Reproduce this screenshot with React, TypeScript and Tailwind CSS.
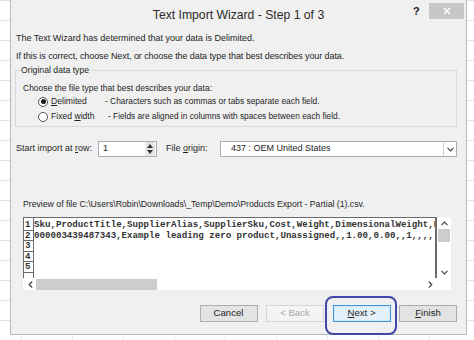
import React from "react";

const Radio = ({ checked }: { checked: boolean }) => (
  <span className="w-[10px] h-[10px] rounded-full border border-[#555] bg-white flex items-center justify-center shrink-0">
    {checked && <span className="w-[5px] h-[5px] rounded-full bg-[#1a1a1a]" />}
  </span>
);

const Btn = ({ children, disabled, focused }: { children: React.ReactNode; disabled?: boolean; focused?: boolean }) => (
  <div
    className={
      "w-[58px] h-[17px] flex items-center justify-center text-[9.6px] border " +
      (disabled
        ? "bg-[#f4f4f4] border-[#d5d5d5] text-[#a8a8a8]"
        : focused
        ? "bg-[#e5f1fb] border-[#3c98e0] text-[#222] ring-1 ring-inset ring-[#cfe6f8]"
        : "bg-[#e3e3e3] border-[#adadad] text-[#222]")
    }
  >
    {children}
  </div>
);

export default function App() {
  const rows = [
    "Sku,ProductTitle,SupplierAlias,SupplierSku,Cost,Weight,DimensionalWeight,DimensionalUnit",
    "000003439487343,Example leading zero product,Unassigned,,1.00,0.00,,1,,,,,,,",
    "",
    "",
    "",
  ];
  return (
    <div className="w-[474px] h-[340px] overflow-hidden relative bg-white bg-[linear-gradient(#e3e3e3_1px,transparent_1px),linear-gradient(90deg,#e3e3e3_1px,transparent_1px)] bg-[size:51px_20px] bg-[position:21px_0px] font-[family-name:'Liberation_Sans',Arial,sans-serif] text-[#1e1e1e]">
      <div className="ml-[10px] w-[457px] h-[335px] bg-[#f0f0f0] border-x border-b border-[#b9b9b9] flex flex-col relative">
        {/* title bar */}
        <div className="h-[28px] shrink-0 relative flex items-start justify-center">
          <div className="pt-[7px] text-[12.2px] leading-[16px] text-[#2b2b2b]">Text Import Wizard - Step 1 of 3</div>
          <div className="absolute left-[402px] top-[4px] text-[11px] font-bold text-[#222] leading-[14px]">?</div>
          <div className="absolute left-[418px] top-[3px] w-[35px] h-[16px] bg-[#c7c7c7] flex items-center justify-center">
            <svg width="8" height="8" viewBox="0 0 8 8">
              <path d="M1 1L7 7M7 1L1 7" stroke="#fff" strokeWidth="1.5" />
            </svg>
          </div>
        </div>

        {/* client */}
        <div className="flex-1 flex flex-col pl-[5px] pr-[9px] text-[9px] whitespace-nowrap">
          <div className="pt-[4px] h-[16px] leading-[12px]">The Text Wizard has determined that your data is Delimited.</div>
          <div className="mt-[6px] h-[12px] leading-[12px] tracking-[-0.08px]">If this is correct, choose Next, or choose the data type that best describes your data.</div>

          {/* group box */}
          <div className="mt-[8px] relative border border-[#d9d9d9] h-[57px] pl-[7px] pt-[11px] -ml-[1px]">
            <div className="absolute left-[4px] -top-[7px] px-[1px] bg-[#f0f0f0] leading-[12px] text-[8.7px]">Original data type</div>
            <div className="leading-[12px] h-[12px] text-[8.5px]">Choose the file type that best describes your data:</div>
            <div className="h-[15px] flex items-center pl-[15px]">
              <Radio checked />
              <span className="ml-[3px] w-[54px] text-[8.6px]">
                <span className="underline">D</span>elimited
              </span>
              <span className="text-[8.4px]">- Characters such as commas or tabs separate each field.</span>
            </div>
            <div className="h-[15px] flex items-center pl-[15px]">
              <Radio checked={false} />
              <span className="ml-[3px] w-[57px] text-[8.6px]">
                Fixed <span className="underline">w</span>idth
              </span>
              <span className="text-[8.3px]">- Fields are aligned in columns with spaces between each field.</span>
            </div>
          </div>

          {/* start import row */}
          <div className="mt-[14px] h-[16px] flex items-center">
            <span className="w-[82px]">
              Start import at <span className="underline">r</span>ow:
            </span>
            <div className="w-[59px] h-[16px] bg-white border border-[#abadb3] flex items-center">
              <span className="flex-1 pl-[4px]">1</span>
              <div className="w-[10px] h-[14px] mr-[1px] bg-[#e6e6e6] flex flex-col items-center justify-center gap-[2px]">
                <svg width="6" height="4" viewBox="0 0 6 4"><path d="M0 4L3 0L6 4Z" fill="#333" /></svg>
                <svg width="6" height="4" viewBox="0 0 6 4"><path d="M0 0L3 4L6 0Z" fill="#333" /></svg>
              </div>
            </div>
            <span className="ml-[9px] w-[54px]">
              File <span className="underline">o</span>rigin:
            </span>
            <div className="flex-1 h-[16px] bg-white border border-[#abadb3] flex items-center">
              <span className="flex-1 pl-[10px]">437 : OEM United States</span>
              <div className="w-[13px] h-[14px] border-l border-[#d0d0d0] flex items-center justify-center">
                <svg width="7" height="5" viewBox="0 0 7 5"><path d="M0.5 0.8L3.5 3.8L6.5 0.8" stroke="#444" strokeWidth="1.2" fill="none" /></svg>
              </div>
            </div>
          </div>

          {/* preview */}
          <div className="mt-[41px] ml-[7px] h-[12px] leading-[12px] text-[8.7px]">
            Preview of file C:\Users\Robin\Downloads\_Temp\Demo\Products Export - Partial (1).csv.
          </div>
          <div className="mt-[7px] ml-[7px] w-[428px] h-[73px] flex flex-col bg-white">
            <div className="flex h-[61px]">
              <div className="w-[414px] border-t border-l border-r-2 border-[#6b6b6b] flex font-[family-name:'Liberation_Mono',monospace] text-[9.15px] font-bold text-[#333] overflow-hidden">
                <div className="w-[10px] shrink-0 border-r border-[#6b6b6b] pt-[2px]">
                  {rows.map((_, i) => (
                    <div key={i} className="h-[10.6px] leading-[10px] border-b border-[#6b6b6b] pl-[1px]">{i + 1}</div>
                  ))}
                </div>
                <div className="flex-1 pt-[2px] overflow-hidden">
                  {rows.map((r, i) => (
                    <div key={i} className="h-[10.6px] leading-[10px] whitespace-pre">{r}</div>
                  ))}
                </div>
              </div>
              <div className="flex-1 flex flex-col items-center">
                <svg className="mt-[4px]" width="7" height="5" viewBox="0 0 7 5"><path d="M0.5 4.2L3.5 1.2L6.5 4.2" stroke="#444" strokeWidth="1.2" fill="none" /></svg>
                <div className="mt-[3px] w-[12px] h-[13px] bg-[#cdcdcd]" />
                <div className="flex-1" />
                <svg className="mb-[3px]" width="7" height="5" viewBox="0 0 7 5"><path d="M0.5 0.8L3.5 3.8L6.5 0.8" stroke="#444" strokeWidth="1.2" fill="none" /></svg>
              </div>
            </div>
            <div className="h-[12px] flex items-center">
              <svg className="ml-[5px]" width="5" height="7" viewBox="0 0 5 7"><path d="M4.2 0.5L1.2 3.5L4.2 6.5" stroke="#444" strokeWidth="1.2" fill="none" /></svg>
              <div className="ml-[3px] w-[121px] h-[11px] bg-[#cdcdcd]" />
              <div className="flex-1" />
              <svg className="mr-[18px]" width="5" height="7" viewBox="0 0 5 7"><path d="M0.8 0.5L3.8 3.5L0.8 6.5" stroke="#444" strokeWidth="1.2" fill="none" /></svg>
            </div>
          </div>

          {/* buttons */}
          <div className="mt-[15px] flex justify-end gap-[8.5px]">
            <Btn>Cancel</Btn>
            <Btn disabled>&lt; Back</Btn>
            <Btn focused>
              <span>
                <span className="underline">N</span>ext &gt;
              </span>
            </Btn>
            <Btn>
              <span>
                <span className="underline">F</span>inish
              </span>
            </Btn>
          </div>
        </div>
      </div>
      {/* annotation highlight */}
      <div className="absolute left-[325px] top-[296px] w-[72px] h-[39px] rounded-[8px] border-2 border-[#3f48a8]" />
    </div>
  );
}
